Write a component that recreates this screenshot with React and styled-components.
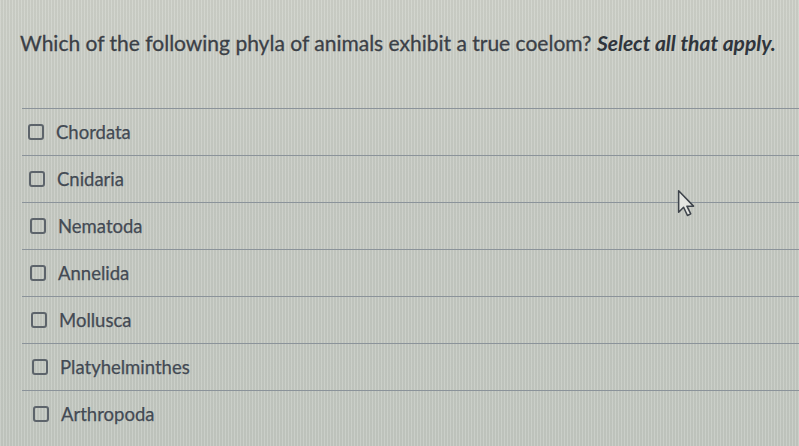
import styled, { createGlobalStyle } from "styled-components";

const GlobalStyle = createGlobalStyle`
  html, body {
    margin: 0;
    padding: 0;
  }
  body {
    background: #c6cac3;
    font-family: Lato, "Open Sans", sans-serif;
  }
`;

const Page = styled.div`
  position: relative;
  width: 799px;
  height: 446px;
  overflow: hidden;
  background:
    repeating-linear-gradient(
      90deg,
      rgba(255, 255, 255, 0.12) 0px,
      rgba(255, 255, 255, 0.12) 1px,
      rgba(0, 0, 0, 0.03) 1px,
      rgba(0, 0, 0, 0.03) 3px
    ),
    linear-gradient(180deg, #cdd0c8 0%, #c6cac3 40%, #c3c8c1 100%);
`;

const Question = styled.h1`
  margin: 0;
  padding: 30px 0 0 20px;
  height: 108px;
  box-sizing: border-box;
  font-size: 21px;
  font-weight: 400;
  color: #3b4047;
  -webkit-text-stroke: 0.3px #3b4047;
  white-space: nowrap;

  em {
    font-weight: 700;
    font-style: italic;
    color: #2f353c;
    -webkit-text-stroke: 0;
  }
`;

const Options = styled.ul`
  list-style: none;
  margin: 0;
  padding: 0 0 0 22px;
`;

const Option = styled.li`
  display: flex;
  align-items: center;
  gap: 12px;
  height: 47px;
  padding-left: ${(p) => 6 + p.$shift}px;
  border-top: 1.5px solid #8b939a;
  box-sizing: border-box;
  font-size: 18.5px;
  color: #434a54;
  -webkit-text-stroke: 0.25px #434a54;
`;

const Box = styled.span`
  width: 16px;
  height: 16px;
  border: 2px solid #5d646b;
  border-radius: 3px;
  box-sizing: border-box;
  flex-shrink: 0;
`;

const Cursor = styled.svg`
  position: absolute;
  left: 677px;
  top: 189px;
`;

const phyla = [
  "Chordata",
  "Cnidaria",
  "Nematoda",
  "Annelida",
  "Mollusca",
  "Platyhelminthes",
  "Arthropoda",
];

export default function App() {
  return (
    <Page>
      <GlobalStyle />
      <Question>
        Which of the following phyla of animals exhibit a true coelom?{" "}
        <em>Select all that apply.</em>
      </Question>
      <Options>
        {phyla.map((name, i) => (
          <Option key={name} $shift={Math.round(i * 0.8)}>
            <Box />
            {name}
          </Option>
        ))}
      </Options>
      <Cursor width="22" height="31" viewBox="0 0 20 28">
        <path
          d="M1.5 1.5 L1.5 21 L6 16.5 L9.5 24 L12.5 22.5 L9 15.5 L15 15.5 Z"
          fill="#e4e6e2"
          stroke="#3d434a"
          strokeWidth="1.4"
          strokeLinejoin="round"
        />
      </Cursor>
    </Page>
  );
}
